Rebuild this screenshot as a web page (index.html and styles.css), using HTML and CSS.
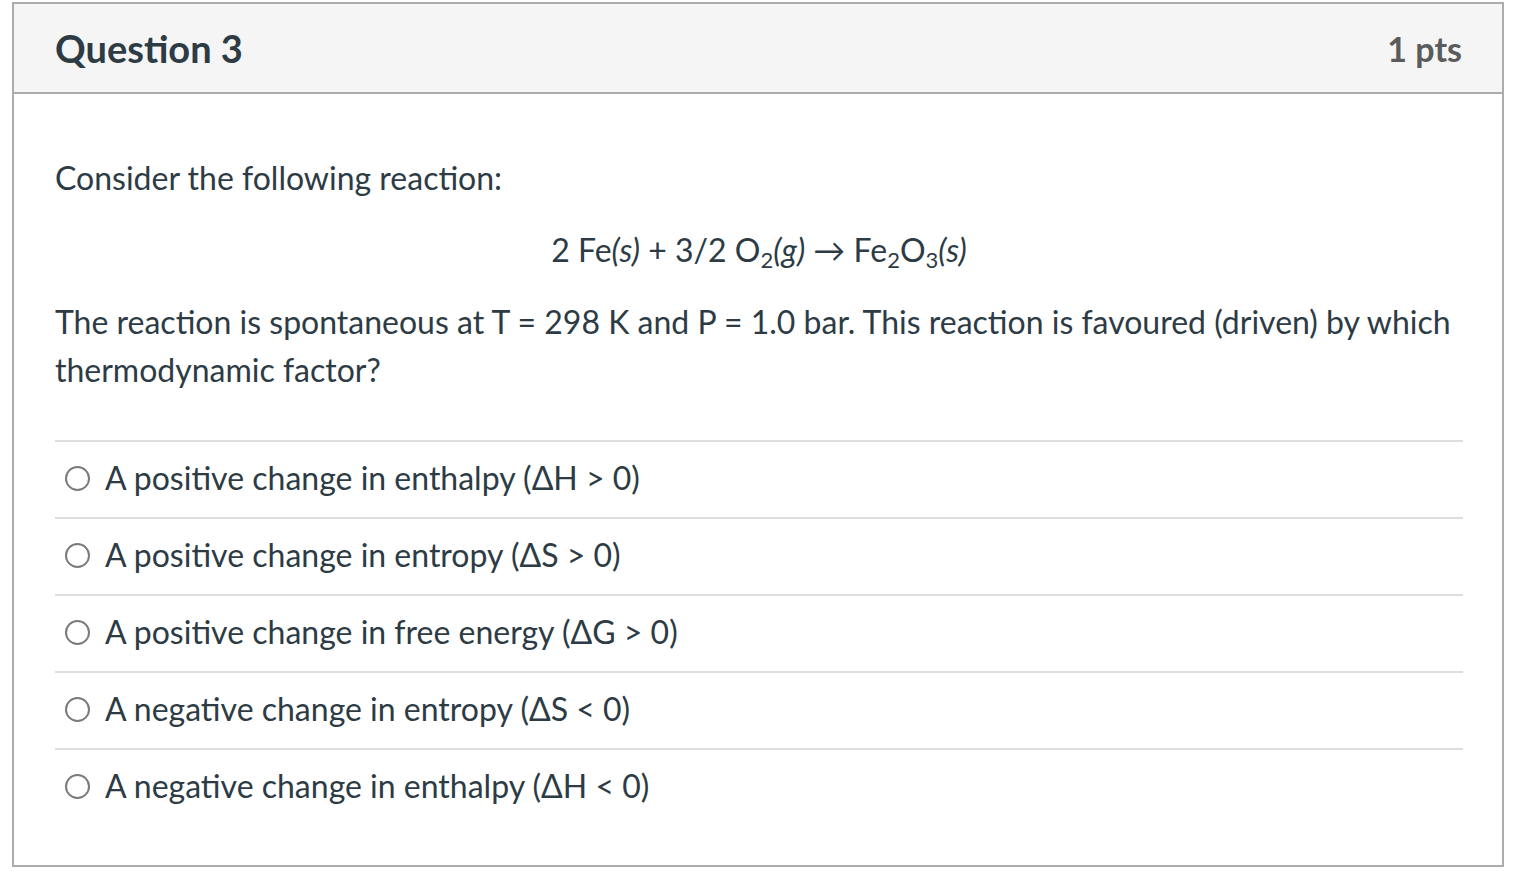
FILE: index.html
```html
<!DOCTYPE html>
<html>
<head>
<meta charset="utf-8">
<link rel="stylesheet" href="styles.css">
</head>
<body>
<div class="question">
  <div class="q-header">
    <h2 class="q-title">Question 3</h2>
    <span class="q-points">1 pts</span>
  </div>
  <div class="q-body">
    <p class="q-text">Consider the following reaction:</p>
    <p class="q-eq">2 Fe<i>(s)</i> + 3/2 O<sub>2</sub><i>(g)</i> → Fe<sub>2</sub>O<sub>3</sub><i>(s)</i></p>
    <p class="q-text">The reaction is spontaneous at T = 298 K and P = 1.0 bar. This reaction is favoured (driven) by which thermodynamic factor?</p>
    <div class="answers">
      <label class="answer"><span class="radio"></span><span>A positive change in enthalpy (ΔH &gt; 0)</span></label>
      <label class="answer"><span class="radio"></span><span>A positive change in entropy (ΔS &gt; 0)</span></label>
      <label class="answer"><span class="radio"></span><span>A positive change in free energy (ΔG &gt; 0)</span></label>
      <label class="answer"><span class="radio"></span><span>A negative change in entropy (ΔS &lt; 0)</span></label>
      <label class="answer"><span class="radio"></span><span>A negative change in enthalpy (ΔH &lt; 0)</span></label>
    </div>
  </div>
</div>
</body>
</html>
```

FILE: styles.css
```css
html, body {
  margin: 0;
  padding: 0;
  background: #ffffff;
}
body {
  font-family: Lato, "Open Sans", sans-serif;
  color: #2d3b45;
}
.question {
  margin: 2px 0 0 12px;
  width: 1492px;
  border: 2px solid #acacac;
  box-sizing: border-box;
}
.q-header {
  height: 90px;
  background: #f5f5f5;
  border-bottom: 2px solid #acacac;
  display: flex;
  align-items: center;
  justify-content: space-between;
  padding: 0 40px 0 41px;
  box-sizing: border-box;
}
.q-title {
  margin: 0;
  font-size: 38px;
  font-weight: 700;
  color: #2d3b45;
}
.q-points {
  font-size: 34px;
  font-weight: 700;
  color: #5b5b5b;
}
.q-body {
  padding: 60px 39px 40px 41px;
}
.q-body p {
  margin: 0 0 24px;
  font-size: 32px;
  line-height: 48px;
}
.q-eq {
  text-align: center;
}
.q-eq sub {
  font-size: 22px;
  vertical-align: -6px;
  line-height: 0;
}
.answers {
  margin-top: 46px;
}
.answer {
  display: flex;
  align-items: center;
  gap: 15px;
  border-top: 2px solid #dedede;
  padding: 12px 0 15px 10px;
  font-size: 32px;
  line-height: 48px;
}
.radio {
  width: 25px;
  height: 25px;
  border: 2px solid #7a7a7a;
  border-radius: 50%;
  box-sizing: border-box;
  flex: none;
  background: #fff;
}
```
